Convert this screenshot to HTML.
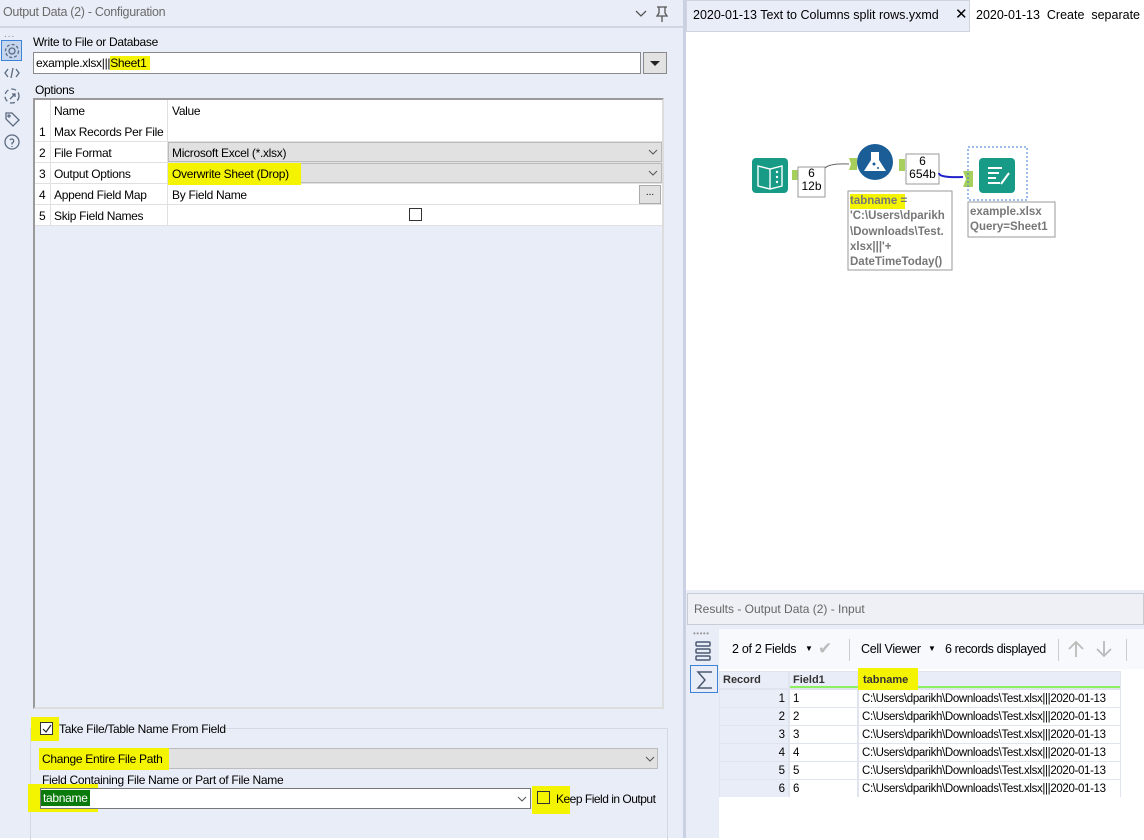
<!DOCTYPE html>
<html><head><meta charset="utf-8"><style>
*{box-sizing:border-box;margin:0;padding:0}
body{width:1144px;height:838px;overflow:hidden;position:relative;font-family:"Liberation Sans",sans-serif;font-size:12px;color:#000;background:#fff}
.a{position:absolute;white-space:nowrap}
.hl{background:#f4f400}
.t{font-size:12px;letter-spacing:-0.3px}
.r{display:flex}
.r div{height:17px;margin-bottom:1px;overflow:hidden;white-space:nowrap}
.c1{width:68px;background:#e9edf7;text-align:right;padding-right:3px}
.c2{width:67px;margin-left:2px;background:#fff;padding-left:3px}
.c3{width:261px;margin-left:2px;background:#fff;padding-left:3px;letter-spacing:-0.35px}
</style></head><body>
<div class="a" style="left:0;top:0;width:683px;height:838px;background:#e9edf7"></div>
<div class="a" style="left:683px;top:0;width:3px;height:838px;background:#c9d1e2"></div>
<div class="a" style="left:0;top:26px;width:683px;height:2px;background:#cfd5e2"></div>
<div class="a t" style="left:3px;top:5px;color:#6b6b6b;font-size:12.5px">Output Data (2) - Configuration</div>
<svg class="a" style="left:635px;top:6px" width="40" height="16"><path d="M1 5l5 5 5-5" stroke="#555" fill="none" stroke-width="1.3"/><path d="M22 1h10M24 1v6l-2 3h10l-2-3V1M27 10v6" stroke="#555" fill="none" stroke-width="1.3"/></svg>
<div class="a" style="left:4px;top:29px;color:#888;font-size:10px;letter-spacing:1px">...</div>
<div class="a" style="left:1px;top:40px;width:21px;height:21px;background:#c5d7ef;border:1px solid #3c82d6"></div>
<svg class="a" style="left:2px;top:41px" width="20" height="110" fill="none" stroke="#5b6a80" stroke-width="1.3">
<circle cx="10" cy="10" r="3"/><circle cx="10" cy="10" r="6.5" stroke-dasharray="3 2"/>
<path d="M6 28l-3 4 3 4M14 28l3 4-3 4M11 27l-2 10"/>
<circle cx="10" cy="55" r="7" stroke-dasharray="5 3"/><path d="M8 58l5-5M10 53h3v3"/>
<path d="M4 72h6l7 7-6 6-7-7z"/><circle cx="7" cy="75" r="1"/>
<circle cx="10" cy="101" r="7"/><path d="M8 99a2 2 0 1 1 2 3v1.5M10 105v1"/>
</svg>
<div class="a t" style="left:33px;top:35px">Write to File or Database</div>
<div class="a" style="left:33px;top:52px;width:608px;height:22px;background:#fff;border:1px solid #8a8a8a"></div>
<div class="a t" style="left:36px;top:56px">example.xlsx|||<span class="hl">Sheet1&nbsp;</span></div>
<div class="a" style="left:643px;top:52px;width:24px;height:22px;background:#e2e2e2;border:1px solid #8a8a8a"></div>
<div class="a" style="left:650px;top:61px;border-left:5px solid transparent;border-right:5px solid transparent;border-top:5px solid #222"></div>
<div class="a t" style="left:35px;top:83px">Options</div>
<div class="a" style="left:33px;top:98px;width:631px;height:611px;border:2px solid #9a9a9a;border-right-color:#ddd;border-bottom-color:#ddd"></div>
<div class="a" style="left:35px;top:100px;width:627px;height:126px;background:#fff"></div>
<div class="a" style="left:50px;top:100px;width:1px;height:126px;background:#e0e0e0"></div>
<div class="a" style="left:167px;top:100px;width:1px;height:126px;background:#e0e0e0"></div>
<div class="a" style="left:35px;top:141px;width:627px;height:1px;background:#e0e0e0"></div>
<div class="a" style="left:35px;top:162px;width:627px;height:1px;background:#e0e0e0"></div>
<div class="a" style="left:35px;top:183px;width:627px;height:1px;background:#e0e0e0"></div>
<div class="a" style="left:35px;top:204px;width:627px;height:1px;background:#e0e0e0"></div>
<div class="a" style="left:35px;top:225px;width:627px;height:1px;background:#e0e0e0"></div>
<div class="a" style="left:168px;top:142px;width:494px;height:20px;background:#e1e1e1;border:1px solid #bbb"></div>
<div class="a" style="left:168px;top:163px;width:494px;height:20px;background:#e1e1e1;border:1px solid #bbb"></div>
<div class="a" style="left:639px;top:185px;width:22px;height:19px;background:#e1e1e1;border:1px solid #aaa;font-size:10px;text-align:center;line-height:14px">...</div>
<div class="a" style="left:409px;top:208px;width:13px;height:13px;border:1px solid #333;background:#fff"></div>
<svg class="a" style="left:647px;top:147px" width="12" height="40" fill="none" stroke="#555"><path d="M2 3l4 4 4-4M2 24l4 4 4-4"/></svg>
<div class="a t" style="left:54px;top:104px">Name</div><div class="a t" style="left:172px;top:104px">Value</div>
<div class="a t" style="left:39px;top:125px">1</div><div class="a t" style="left:54px;top:125px">Max Records Per File</div>
<div class="a t" style="left:39px;top:146px">2</div><div class="a t" style="left:54px;top:146px">File Format</div><div class="a t" style="left:172px;top:146px">Microsoft Excel (*.xlsx)</div>
<div class="a t" style="left:39px;top:167px">3</div><div class="a t" style="left:54px;top:167px">Output Options</div><div class="a t hl" style="left:168px;top:163px;padding:4px 12px 4px 4px">Overwrite Sheet (Drop)</div>
<div class="a t" style="left:39px;top:188px">4</div><div class="a t" style="left:54px;top:188px">Append Field Map</div><div class="a t" style="left:172px;top:188px">By Field Name</div>
<div class="a t" style="left:39px;top:209px">5</div><div class="a t" style="left:54px;top:209px">Skip Field Names</div>
<div class="a" style="left:30px;top:728px;width:638px;height:112px;border:1px solid #d3d8e2;border-bottom:none"></div>
<div class="a" style="left:36px;top:718px;width:186px;height:22px;background:#e9edf7"></div>
<div class="a hl" style="left:31px;top:717px;width:28px;height:24px"></div>
<div class="a" style="left:40px;top:722px;width:13px;height:13px;border:1px solid #333;background:#fff"></div>
<svg class="a" style="left:41px;top:723px" width="12" height="12"><path d="M2 6l3 3 5-7" stroke="#222" fill="none" stroke-width="1.2"/></svg>
<div class="a t" style="left:59px;top:722px">Take File/Table Name From Field</div>
<div class="a" style="left:39px;top:748px;width:619px;height:21px;background:#e1e1e1;border:1px solid #bbb"></div>
<div class="a t hl" style="left:39px;top:748px;padding:4px 6px 4px 3px">Change Entire File Path</div>
<svg class="a" style="left:644px;top:754px" width="12" height="10" fill="none" stroke="#555"><path d="M2 3l4 4 4-4"/></svg>
<div class="a t" style="left:42px;top:773px">Field Containing File Name or Part of File Name</div>
<div class="a hl" style="left:28px;top:784px;width:70px;height:28px"></div>
<div class="a" style="left:40px;top:788px;width:491px;height:21px;background:#fff;border:1px solid #777"></div>
<div class="a t" style="left:41px;top:790px;background:#0a7a0a;color:#fff;padding:1px 2px">tabname</div>
<svg class="a" style="left:516px;top:794px" width="12" height="10" fill="none" stroke="#555"><path d="M2 3l4 4 4-4"/></svg>
<div class="a hl" style="left:532px;top:786px;width:38px;height:28px"></div>
<div class="a" style="left:537px;top:791px;width:13px;height:13px;border:1px solid #333"></div>
<div class="a t" style="left:556px;top:792px;letter-spacing:-0.5px">Keep Field in Output</div>
<div class="a" style="left:686px;top:0;width:458px;height:32px;background:#fff"></div>
<div class="a" style="left:686px;top:0;width:284px;height:32px;background:#e9edf7;border:1px solid #cdd3df"></div>
<div class="a" style="left:693px;top:8px;font-size:12.5px">2020-01-13 Text to Columns split rows.yxmd</div>
<div class="a" style="left:955px;top:5px;font-size:15px">✕</div>
<div class="a" style="left:976px;top:8px;font-size:12.5px">2020-01-13&nbsp; Create&nbsp; separate&nbsp; tal</div>
<svg class="a" style="left:686px;top:32px" width="458" height="560">
<rect x="66" y="126" width="36" height="35" rx="4" fill="#179b87"/>
<path d="M72 134l12 3 12-3v20l-12 3-12-3z" fill="none" stroke="#fff" stroke-width="1.4"/><path d="M84 137v20" stroke="#fff" stroke-width="1.4"/>
<circle cx="91" cy="140" r="1.2" fill="#fff"/><circle cx="91" cy="145" r="1.2" fill="#fff"/><circle cx="91" cy="150" r="1.2" fill="#fff"/>
<rect x="106" y="138" width="6" height="10" fill="#a7cf5b"/>
<rect x="112" y="135" width="27" height="30" fill="#fff" stroke="#999"/>
<path d="M139 136q5-5 24-4" stroke="#666" fill="none"/>
<path d="M163 126h8v12h-8l2-6z" fill="#a7cf5b"/>
<circle cx="189" cy="130" r="18" fill="#1a5d97"/>
<path d="M185 120v8l-7 11h22l-7-11v-8" fill="#fff"/><circle cx="188" cy="132" r="1.5" fill="#1a5d97"/><circle cx="192" cy="136" r="1" fill="#1a5d97"/>
<path d="M213 127h6v12h-6z" fill="#a7cf5b"/>
<rect x="220" y="122" width="33" height="30" fill="#fff" stroke="#999"/>
<path d="M253 141q0 5 24 4" stroke="#22c" stroke-width="2" fill="none"/>
<path d="M277 139h10v16h-10l3-8z" fill="#a7cf5b"/>
<rect x="282" y="115" width="59" height="53" fill="none" stroke="#3a7bd5" stroke-dasharray="2 2"/>
<rect x="293" y="126" width="36" height="35" rx="4" fill="#179b87"/>
<path d="M302 136h14M302 141h11M302 146h8M302 151h12" stroke="#fff" stroke-width="2"/><path d="M315 152l8-11" stroke="#fff" stroke-width="2"/>
<rect x="282" y="170" width="87" height="35" fill="#fff" stroke="#999"/>
<rect x="162" y="159" width="104" height="79" fill="#fff" stroke="#999"/>
<rect x="164" y="162" width="55" height="15" fill="#f4f400"/>
</svg>
<div class="a" style="left:798px;top:167px;width:27px;text-align:center;font-size:12px;line-height:13px">6<br>12b</div>
<div class="a" style="left:906px;top:155px;width:33px;text-align:center;font-size:12px;line-height:13px">6<br>654b</div>
<div class="a" style="left:850px;top:194px;font-size:11.5px;color:#777;line-height:15.3px;font-weight:bold">tabname =<br>'C:\Users\dparikh<br>\Downloads\Test.<br>xlsx|||'+<br>DateTimeToday()</div>
<div class="a" style="left:970px;top:205px;font-size:11.5px;color:#777;line-height:15.3px;font-weight:bold">example.xlsx<br>Query=Sheet1</div>
<div class="a" style="left:686px;top:590px;width:458px;height:248px;background:#e9edf7"></div>
<div class="a" style="left:687px;top:593px;width:457px;height:32px;background:#eef0f5;border:1px solid #c9ccd3"></div>
<div class="a" style="left:694px;top:602px;font-size:12px;color:#666">Results - Output Data (2) - Input</div>
<div class="a" style="left:719px;top:629px;width:425px;height:40px;background:#f7f9fc"></div>
<div class="a" style="left:719px;top:669px;width:425px;height:169px;background:#fff"></div>
<div class="a" style="left:693px;top:629px;color:#999;font-size:8px;letter-spacing:0.5px">•••••</div>
<svg class="a" style="left:694px;top:641px" width="20" height="20" fill="none" stroke="#4b5a72" stroke-width="1.5"><rect x="2" y="1" width="14" height="4" rx="1"/><rect x="2" y="8" width="14" height="4" rx="1"/><rect x="2" y="15" width="14" height="4" rx="1"/></svg>
<div class="a" style="left:690px;top:665px;width:28px;height:28px;border:1px solid #3c82d6"></div>
<svg class="a" style="left:695px;top:670px" width="20" height="20" fill="none" stroke="#4b5a72" stroke-width="1.5"><path d="M17 2H3l7 8-7 8h14"/></svg>
<div class="a" style="left:732px;top:642px;font-size:12.5px;letter-spacing:-0.3px">2 of 2 Fields</div>
<div class="a" style="left:805px;top:644px;font-size:8px">▼</div>
<div class="a" style="left:818px;top:639px;color:#bbb;font-size:17px">✔</div>
<div class="a" style="left:849px;top:639px;width:1px;height:22px;background:#ccc"></div>
<div class="a" style="left:861px;top:642px;font-size:12.5px;letter-spacing:-0.3px">Cell Viewer</div>
<div class="a" style="left:928px;top:644px;font-size:8px">▼</div>
<div class="a" style="left:945px;top:642px;font-size:12.5px;letter-spacing:-0.4px">6 records displayed</div>
<div class="a" style="left:1058px;top:639px;width:1px;height:22px;background:#ccc"></div>
<svg class="a" style="left:1066px;top:639px" width="50" height="20" fill="none" stroke="#bbb" stroke-width="1.8"><path d="M10 18V3M3 10l7-7 7 7M38 2v15M31 10l7 7 7-7"/></svg>
<div class="a" style="left:1126px;top:639px;width:1px;height:22px;background:#ccc"></div>
<div class="a" style="left:719px;top:671px;width:402px;height:126px;background:#dfe4ee"></div>
<div class="a" style="left:720px;top:672px;width:68px;height:16px;background:#e9edf7"></div>
<div class="a" style="left:790px;top:672px;width:67px;height:16px;background:#e9edf7"></div>
<div class="a" style="left:859px;top:672px;width:261px;height:16px;background:#e9edf7"></div>
<div class="a" style="left:790px;top:686px;width:330px;height:2px;background:#8cf060"></div>
<div class="a" style="left:858px;top:668px;width:60px;height:22px;background:#f4f400"></div>
<div class="a" style="left:723px;top:674px;font-weight:bold;font-size:11px;color:#333">Record</div>
<div class="a" style="left:793px;top:674px;font-weight:bold;font-size:11px;color:#333">Field1</div>
<div class="a" style="left:863px;top:674px;font-weight:bold;font-size:11px;color:#333">tabname</div>
<div class="a" style="left:720px;top:690px;font-size:11.5px;line-height:18px">
<div class="r"><div class="c1">1</div><div class="c2">1</div><div class="c3">C:\Users\dparikh\Downloads\Test.xlsx|||2020-01-13</div></div>
<div class="r"><div class="c1">2</div><div class="c2">2</div><div class="c3">C:\Users\dparikh\Downloads\Test.xlsx|||2020-01-13</div></div>
<div class="r"><div class="c1">3</div><div class="c2">3</div><div class="c3">C:\Users\dparikh\Downloads\Test.xlsx|||2020-01-13</div></div>
<div class="r"><div class="c1">4</div><div class="c2">4</div><div class="c3">C:\Users\dparikh\Downloads\Test.xlsx|||2020-01-13</div></div>
<div class="r"><div class="c1">5</div><div class="c2">5</div><div class="c3">C:\Users\dparikh\Downloads\Test.xlsx|||2020-01-13</div></div>
<div class="r"><div class="c1">6</div><div class="c2">6</div><div class="c3">C:\Users\dparikh\Downloads\Test.xlsx|||2020-01-13</div></div>
</div>
</body></html>
